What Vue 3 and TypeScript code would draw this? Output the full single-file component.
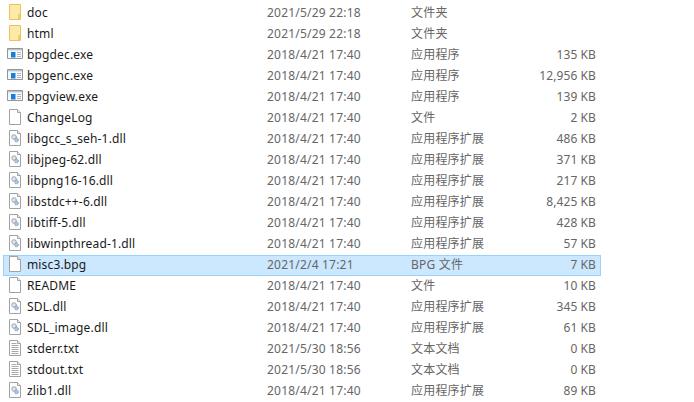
<script setup lang="ts">
type Kind = 'folder' | 'exe' | 'file' | 'dll' | 'txt'
interface Row { name: string; date: string; type: string; size: string; kind: Kind; selected?: boolean }
const d = '2018/4/21 17:40'
const rows: Row[] = [
  { name: 'doc', date: '2021/5/29 22:18', type: '文件夹', size: '', kind: 'folder' },
  { name: 'html', date: '2021/5/29 22:18', type: '文件夹', size: '', kind: 'folder' },
  { name: 'bpgdec.exe', date: d, type: '应用程序', size: '135 KB', kind: 'exe' },
  { name: 'bpgenc.exe', date: d, type: '应用程序', size: '12,956 KB', kind: 'exe' },
  { name: 'bpgview.exe', date: d, type: '应用程序', size: '139 KB', kind: 'exe' },
  { name: 'ChangeLog', date: d, type: '文件', size: '2 KB', kind: 'file' },
  { name: 'libgcc_s_seh-1.dll', date: d, type: '应用程序扩展', size: '486 KB', kind: 'dll' },
  { name: 'libjpeg-62.dll', date: d, type: '应用程序扩展', size: '371 KB', kind: 'dll' },
  { name: 'libpng16-16.dll', date: d, type: '应用程序扩展', size: '217 KB', kind: 'dll' },
  { name: 'libstdc++-6.dll', date: d, type: '应用程序扩展', size: '8,425 KB', kind: 'dll' },
  { name: 'libtiff-5.dll', date: d, type: '应用程序扩展', size: '428 KB', kind: 'dll' },
  { name: 'libwinpthread-1.dll', date: d, type: '应用程序扩展', size: '57 KB', kind: 'dll' },
  { name: 'misc3.bpg', date: '2021/2/4 17:21', type: 'BPG 文件', size: '7 KB', kind: 'file', selected: true },
  { name: 'README', date: d, type: '文件', size: '10 KB', kind: 'file' },
  { name: 'SDL.dll', date: d, type: '应用程序扩展', size: '345 KB', kind: 'dll' },
  { name: 'SDL_image.dll', date: d, type: '应用程序扩展', size: '61 KB', kind: 'dll' },
  { name: 'stderr.txt', date: '2021/5/30 18:56', type: '文本文档', size: '0 KB', kind: 'txt' },
  { name: 'stdout.txt', date: '2021/5/30 18:56', type: '文本文档', size: '0 KB', kind: 'txt' },
  { name: 'zlib1.dll', date: d, type: '应用程序扩展', size: '89 KB', kind: 'dll' },
]
</script>

<template>
  <div class="list">
    <div v-for="r in rows" :key="r.name" class="row" :class="{ selected: r.selected }">
      <svg class="icon" width="16" height="16" viewBox="0 0 16 16">
        <template v-if="r.kind === 'folder'">
          <path d="M2.5 0.5h11v15h-11z" fill="#fde9a8" stroke="#e9c45e" />
          <path d="M11.5 15v-4l1.5-1.5v5.5z" fill="#f8d877" stroke="#e9c45e" stroke-width="0.7" />
        </template>
        <template v-else-if="r.kind === 'exe'">
          <path d="M0.5 2.5h15v10h-15z" fill="#f7f8fa" stroke="#8f969d" />
          <path d="M1 3h14v1.4H1z" fill="#bcc5cd" />
          <path d="M4 6h4.5v5.5H4z" fill="#1a7cdc" />
          <path d="M10 6.5h4M10 8.5h4M10 10.5h4" stroke="#b0b7be" />
        </template>
        <template v-else>
          <path d="M2.5 0.5h8l3 3v12h-11z" fill="#fff" stroke="#a2a2a2" />
          <path d="M10.5 0.5v3h3" fill="#f0f0f0" stroke="#a2a2a2" />
          <template v-if="r.kind === 'dll'">
            <circle cx="7" cy="7" r="2.4" fill="#cfd3d8" stroke="#8a949e" stroke-dasharray="1 0.6" />
            <circle cx="7" cy="7" r="0.8" fill="#fff" />
            <circle cx="9.5" cy="10" r="1.9" fill="#a9c9ea" stroke="#7296bb" stroke-dasharray="1 0.6" />
          </template>
          <path v-if="r.kind === 'txt'" d="M4.5 3.5h5M4.5 5.5h7M4.5 7.5h7M4.5 9.5h7M4.5 11.5h7M4.5 13.5h7" stroke="#a8a8a8" />
        </template>
      </svg>
      <span class="name">{{ r.name }}</span>
      <span class="meta">{{ r.date }}</span>
      <span class="meta">{{ r.type }}</span>
      <span class="meta size">{{ r.size }}</span>
    </div>
  </div>
</template>

<style scoped>
.list {
  width: 694px;
  height: 402px;
  box-sizing: border-box;
  padding: 3px 0 0 3px;
  background: #fff;
  font-family: "Noto Sans", "Noto Sans CJK SC", sans-serif;
  font-size: 12px;
  overflow: hidden;
}
.row {
  display: grid;
  grid-template-columns: 23px 240px 144px 100px 87px;
  width: 598px;
  height: 21px;
  box-sizing: border-box;
  align-items: start;
  border: 1px solid transparent;
  white-space: nowrap;
  line-height: 17px;
}
.row.selected {
  background: #cce8ff;
  border-color: #99d1ff;
}
.icon {
  margin-left: 3px;
  display: block;
}
.name { color: #1a1a1a; letter-spacing: 0.15px; }
.meta { color: #666; letter-spacing: 0.2px; }
.size { text-align: right; padding-right: 2px; letter-spacing: 0.1px; }
</style>
<style>
html, body { margin: 0; background: #fff; }
</style>
